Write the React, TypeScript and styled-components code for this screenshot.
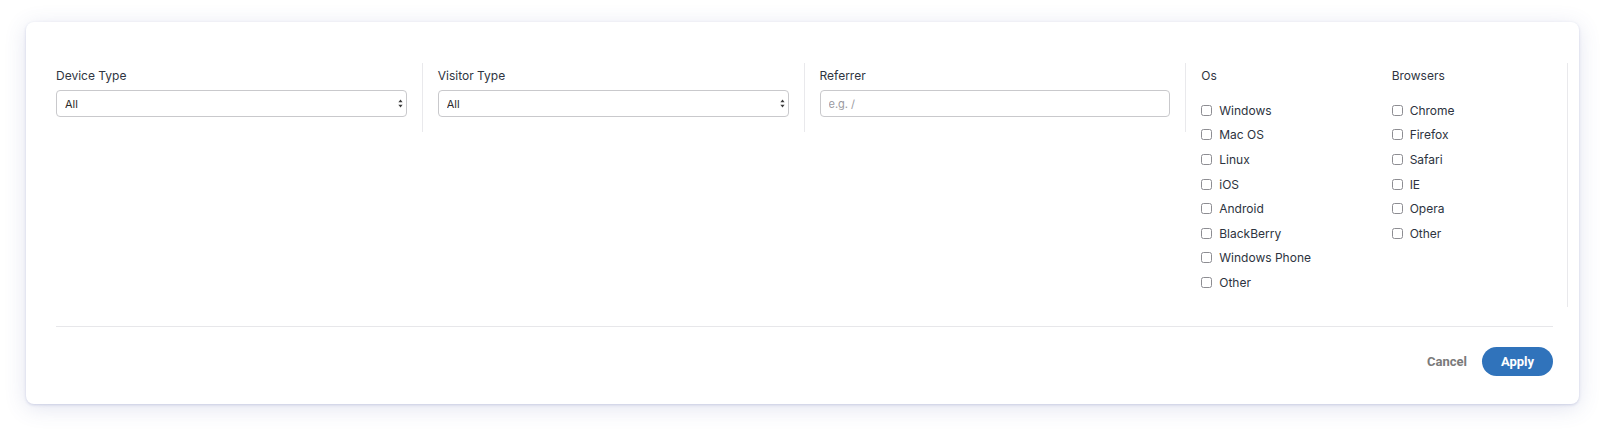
import React from "react";
import styled, { createGlobalStyle } from "styled-components";

const GlobalStyle = createGlobalStyle`
  * {
    box-sizing: border-box;
  }

  body {
    margin: 0;
    background: #ffffff;
    font-family: "Inter", "Noto Sans", sans-serif;
    color: #2d3340;
  }
`;

const Page = styled.div`
  padding: 22px 21px 28px 26px;
`;

const Card = styled.div`
  background: #ffffff;
  border-radius: 8px;
  padding: 41px 26px 28px 30px;
  box-shadow: 0 4px 22px rgba(72, 88, 160, 0.16), 0 1px 3px rgba(72, 88, 160, 0.22);
`;

const FilterRow = styled.div`
  display: grid;
  grid-template-columns: repeat(4, 1fr);
  align-items: start;
  margin: 0 -15px;
`;

const Column = styled.div<{ $bottom?: number }>`
  padding: 0 15px ${(p) => p.$bottom ?? 15}px;
  border-right: 1px solid #e9e9ec;
`;

const SubRow = styled.div`
  display: grid;
  grid-template-columns: repeat(2, 1fr);
  margin: 0 -15px;
`;

const SubColumn = styled.div`
  padding: 0 15px;
`;

const Label = styled.div`
  margin: 3px 0 4px;
  font-size: 12px;
  line-height: 20px;
  color: #2f3542;
`;

const SelectWrap = styled.div`
  position: relative;
  height: 27px;
`;

const Select = styled.select`
  appearance: none;
  width: 100%;
  height: 27px;
  padding: 0 20px 0 8px;
  border: 1px solid #c9c9cc;
  border-radius: 4px;
  background: #ffffff;
  font-family: "Inter", "Noto Sans", sans-serif;
  font-size: 11px;
  color: #2b2b2b;
  outline: none;
`;

const Arrows = styled.svg`
  position: absolute;
  right: 4px;
  top: 9px;
  pointer-events: none;
`;

const TextInput = styled.input`
  width: 100%;
  height: 27px;
  padding: 0 8px;
  border: 1px solid #c9c9cc;
  border-radius: 4px;
  font-family: "Inter", "Noto Sans", sans-serif;
  font-size: 11px;
  color: #2b2b2b;
  outline: none;

  &::placeholder {
    color: #9a9a9f;
  }
`;

const CheckList = styled.div`
  margin-top: 12px;
`;

const CheckItem = styled.label`
  display: flex;
  align-items: center;
  gap: 7px;
  height: 24.6px;
  font-size: 12px;
  color: #2d3340;
`;

const Box = styled.span`
  width: 11px;
  height: 11px;
  border: 1px solid #8d8d92;
  border-radius: 2.5px;
  background: #ffffff;
  flex: none;
`;

const Divider = styled.div`
  margin-top: 19px;
  border-top: 1px solid #e7e7ea;
`;

const Footer = styled.div`
  display: flex;
  justify-content: flex-end;
  align-items: center;
  gap: 15px;
  margin-top: 20px;
`;

const CancelButton = styled.button`
  border: none;
  background: none;
  padding: 0;
  font-family: "Roboto", "Liberation Sans", sans-serif;
  font-weight: 700;
  font-size: 13px;
  color: #7a7a7a;
`;

const ApplyButton = styled.button`
  width: 71px;
  height: 29px;
  border: none;
  border-radius: 15px;
  background: #3073bb;
  font-family: "Roboto", "Liberation Sans", sans-serif;
  font-weight: 700;
  font-size: 13px;
  color: #ffffff;
`;

const osOptions = ["Windows", "Mac OS", "Linux", "iOS", "Android", "BlackBerry", "Windows Phone", "Other"];
const browserOptions = ["Chrome", "Firefox", "Safari", "IE", "Opera", "Other"];

function SelectField({ label }: { label: string }) {
  return (
    <Column>
      <Label>{label}</Label>
      <SelectWrap>
        <Select defaultValue="all">
          <option value="all">All</option>
        </Select>
        <Arrows width="5" height="9" viewBox="0 0 5 9">
          <path d="M2.5 0.5 L4.6 3.3 L0.4 3.3 Z" fill="#3a3a3a" />
          <path d="M2.5 8.5 L4.6 5.7 L0.4 5.7 Z" fill="#3a3a3a" />
        </Arrows>
      </SelectWrap>
    </Column>
  );
}

function CheckGroup({ title, options }: { title: string; options: string[] }) {
  return (
    <SubColumn>
      <Label>{title}</Label>
      <CheckList>
        {options.map((option) => (
          <CheckItem key={option}>
            <Box />
            {option}
          </CheckItem>
        ))}
      </CheckList>
    </SubColumn>
  );
}

function App(): React.ReactElement {
  return (
    <>
      <GlobalStyle />
      <Page>
        <Card>
          <FilterRow>
            <SelectField label="Device Type" />
            <SelectField label="Visitor Type" />
            <Column>
              <Label>Referrer</Label>
              <TextInput placeholder="e.g. /" />
            </Column>
            <Column $bottom={12}>
              <SubRow>
                <CheckGroup title="Os" options={osOptions} />
                <CheckGroup title="Browsers" options={browserOptions} />
              </SubRow>
            </Column>
          </FilterRow>
          <Divider />
          <Footer>
            <CancelButton>Cancel</CancelButton>
            <ApplyButton>Apply</ApplyButton>
          </Footer>
        </Card>
      </Page>
    </>
  );
}

export default App;
